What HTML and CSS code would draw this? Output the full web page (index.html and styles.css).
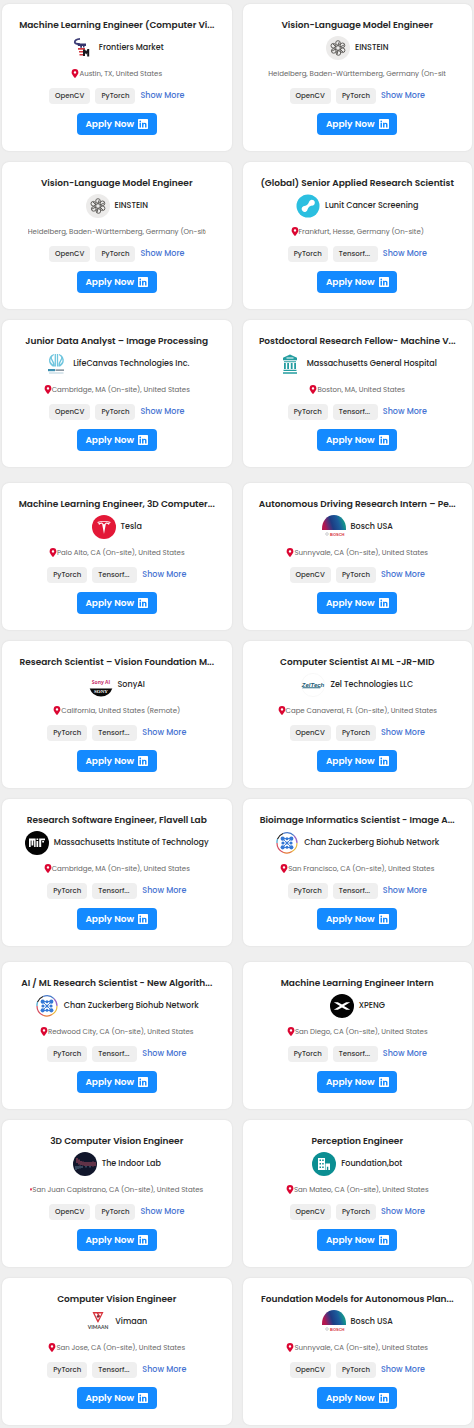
FILE: index.html
```html
<!DOCTYPE html>
<html lang="en">
<head>
<meta charset="utf-8">
<meta name="viewport" content="width=device-width, initial-scale=1">
<title>Computer vision jobs</title>
<link rel="stylesheet" href="styles.css">
</head>
<body>
<svg class="sprite" aria-hidden="true">
  <defs>
    <linearGradient id="bosch-fill" x1="0" x2="1" y1="0.2" y2="0">
      <stop offset="0" stop-color="#b3164f"/><stop offset="0.15" stop-color="#6a2a73"/><stop offset="0.32" stop-color="#1d3c83"/><stop offset="0.6" stop-color="#1b5c9c"/><stop offset="0.8" stop-color="#158f8f"/><stop offset="1" stop-color="#12a35e"/>
    </linearGradient>
  </defs>
  <symbol id="pin" viewBox="0 0 384 512"><path fill="#db0632" d="M172 502C27 291 0 270 0 192a192 192 0 0 1 384 0c0 78-27 99-172 310-10 13-30 13-40 0zM192 262a70 70 0 1 0 0-140 70 70 0 0 0 0 140z"/></symbol>
  <symbol id="linkedin" viewBox="0 0 20 20"><path fill="#fff" fill-rule="evenodd" d="M1.500 0h17A1.500 1.500 0 0 1 20 1.500v17a1.500 1.500 0 0 1-1.500 1.500h-17A1.500 1.500 0 0 1 0 18.500v-17A1.500 1.500 0 0 1 1.500 0zM3 7.600V17h3V7.600zM4.500 3a1.700 1.700 0 1 0 0 3.400 1.700 1.700 0 0 0 0-3.400zM8 7.600V17h3v-4.800c0-1.300.4-2.300 1.700-2.300S14.100 11 14.100 12.300V17H17v-5.300c0-2.600-.7-4.400-3.500-4.400-1.400 0-2.200.7-2.600 1.500V7.600z"/></symbol>
  <symbol id="frontiers" viewBox="0 0 24 24">
    <path fill="none" stroke="#3f3f78" stroke-width="1.800" d="M10 2.800C6.500 3 4.500 4.500 4.800 6.400c.2 1.400 2.300 1.700 5 1.500"/>
    <path fill="#34346c" d="M7 7.500h9V10h-1.500v1.500H13V10h-1v1.800h-1.800V10H8z"/><path fill="#d2373e" d="M8 12h7v1.700H8zM9 15h4v1.600H9zM9.500 18h4v1.400h-4z"/><path fill="#17171d" d="M13 13.500h2l1.200 1.800 1.300-2.300h1.700v7.500h-2V17l-1 1.500-1.200-1.500v3h-2z"/>
  </symbol>
  <symbol id="einstein" viewBox="0 0 24 24">
    <circle cx="12" cy="12" r="12" fill="#ecebea"/>
    <g fill="none" stroke="#55524f" stroke-width="0.900"><circle cx="12" cy="12" r="2.300"/><circle cx="12" cy="7" r="2.300"/><circle cx="16.500" cy="9.300" r="2.300"/><circle cx="16.600" cy="14.300" r="2.300"/><circle cx="12.400" cy="17" r="2.300"/><circle cx="7.700" cy="14.900" r="2.300"/><circle cx="7.300" cy="9.700" r="2.300"/><path d="M12 9.300l1-3M14 11l4-2M14 13l3 3M12 14.500l-1 4M10 13l-4 2M10 11L7 8"/></g>
  </symbol>
  <symbol id="lunit" viewBox="0 0 24 24">
    <circle cx="12" cy="12" r="11.500" fill="#2bbfe0"/>
    <path fill="#fff" d="M12.900 8.200a3 3 0 1 1 4.200 3.200c-3 .2-4.700 1.500-5.500 3.900a3 3 0 1 1-4.200-3.100c3-.3 4.700-1.600 5.500-4z"/>
  </symbol>
  <symbol id="lifecanvas" viewBox="0 0 24 24">
    <g fill="none" stroke="#6fc5de" stroke-width="1.300"><path d="M11.300 2v12.500M9.800 2.500C7 4 6.500 6 8 8s2 3 2 6.500M8 3.500C5 6 5 9.500 7 11.500s2.500 2 2.500 3M6 7c-1 3 0 5 3 7M13.500 2v12.500M15 2.500c3 1.500 3.500 3.500 2 5.500s-2 3-2 6.500M16.800 3.500c3 2.500 3 6 1 8s-2.500 2-2.500 3M18.800 7c1 3 0 5-3 7"/></g>
    <path fill="#3b8fb0" d="M4 17h7v2.200H4z"/><path fill="#8b98a3" d="M11.500 17.300H20v1.700h-8.500z"/><path fill="#b5cfdb" d="M5 20.500h14.500v1H5z"/>
  </symbol>
  <symbol id="mgh" viewBox="0 0 24 24">
    <path fill="#249da0" fill-rule="evenodd" d="M12 2.500 19 5.800V8.200H5V5.800zM8.500 5.600v1h7v-1zM6 9.200h12v1H6zM6 11h1.800v6H6zM9.200 11H11v6H9.200zM12.800 11h1.800v6h-1.800zM16.200 11H18v6h-1.800zM5.500 17.800h13v1.300h-13zM5 20.200h14v1.500H5z"/>
  </symbol>
  <symbol id="tesla" viewBox="0 0 24 24">
    <circle cx="12" cy="12" r="12" fill="#e31837"/>
    <path fill="#fff" d="m12 19 1.900-10.200c1.700 0 2.300.2 2.400 1 0 0 1.200-.4 1.700-1.300-2-1-4-1-4-1l-2 2-2-2s-2 0-4 1c.5.900 1.700 1.300 1.700 1.300.1-.8.700-1 2.400-1zM12 6.700c2 0 4.300.3 6.200 1.200.3-.4.400-.8.400-.8-2.300-1-4.600-1.200-6.600-1.200s-4.300.2-6.600 1.200c0 0 .1.400.4.800C7.700 7 10 6.700 12 6.700z"/>
  </symbol>
  <symbol id="mit" viewBox="0 0 24 24">
    <circle cx="12" cy="12" r="12" fill="#030303"/>
    <path fill="#fff" d="M4 7.500h6.600V16H9.100V9.500H8.300v5H6.500v-5H5.700V16H4zM11.500 7.500h1.700V9h-1.700zM11.500 10h1.700v6h-1.700zM14.200 7.500H20v1.800h-3.800V16h-2zM17.200 10H19v1.500h-1.800z"/>
  </symbol>
  <symbol id="biohub" viewBox="0 0 24 24">
    <g fill="none" stroke-width="1.200"><path stroke="#222" d="M2.500 8A10 10 0 0 1 8 2.500"/><path stroke="#4779c9" d="M8 2.500a10 10 0 0 1 11 2.200"/><path stroke="#9a68c4" d="M19 4.700A10 10 0 0 1 22 12"/><path stroke="#e9b83e" d="M22 12a10 10 0 0 1-5 8.600"/><path stroke="#e57a3a" d="M17 20.600a10 10 0 0 1-9 .600"/><path stroke="#d54c5e" d="M8 21.200A10 10 0 0 1 2 12"/><path stroke="#45a5cf" d="M2 12a10 10 0 0 1 .500-4"/></g>
    <g fill="#3478d5"><circle cx="7.700" cy="7.700" r="2.100"/><circle cx="12" cy="7.700" r="1.500"/><circle cx="16.300" cy="7.700" r="2.100"/><circle cx="8" cy="12" r="1.600"/><circle cx="12" cy="12" r="1.500"/><circle cx="16" cy="12" r="1.600"/><circle cx="7.700" cy="16.300" r="2.100"/><circle cx="12" cy="16.300" r="1.500"/><circle cx="16.300" cy="16.300" r="2.100"/></g>
    <path fill="none" stroke="#3478d5" stroke-width="0.900" d="M8 8l4 4 4-4M8 16l4-4 4 4M8 7.500h8M8 16.500h8"/>
  </symbol>
  <symbol id="xpeng" viewBox="0 0 24 24">
    <circle cx="12" cy="12" r="12" fill="#030303"/><path fill="#fff" d="M3.800 8.300h4L12 10.500l4.200-2.200h4L14 12l6.200 3.700h-4L12 13.500l-4.200 2.200h-4L10 12z"/>
  </symbol>
  <symbol id="indoor" viewBox="0 0 24 24">
    <circle cx="12" cy="12" r="12" fill="#11162b"/>
    <path stroke="#c4566b" stroke-width="0.900" fill="none" d="M4 6v5M6 7.500v5M8 9v4M10 9.500v4M12 10v4M14 10v4M16 10v4M18 10v4M20 9.500v5M22 10v4"/><path stroke="#6f93a8" stroke-width="0.800" fill="none" d="M3 14v4M5 14v3M7 13.500v3M9 14v2M13 14v1.500M17 14v1.500"/>
  </symbol>
  <symbol id="foundation" viewBox="0 0 24 24">
    <circle cx="12" cy="12" r="12" fill="#0b8e92"/>
    <path fill="#fff" fill-rule="evenodd" d="M6 6h7v12H6zM7.500 7.500V9H9V7.500zM10.200 7.500V9h1.500V7.500zM7.500 11v1.500H9V11zM10.200 11v1.500h1.500V11zM7.500 14.500V16H9v-1.500zM10.200 14.500V16h1.500v-1.500zM13.500 11.500H18V18h-1.700v-3.200h-1.400V18h-1.400z"/>
  </symbol>
</svg>
<main class="jobs">
  <section class="group">
    <article class="card">
      <h2 class="title">Machine Learning Engineer (Computer Vi...</h2>
      <div class="company"><svg class="logo"><use href="#frontiers"/></svg><span>Frontiers Market</span></div>
      <p class="location"><svg class="pin"><use href="#pin"/></svg><span>Austin, TX, United States</span></p>
      <div class="tags"><span class="tag">OpenCV</span><span class="tag">PyTorch</span><button class="more">Show More</button></div>
      <a class="apply" href="#">Apply Now<svg class="in"><use href="#linkedin"/></svg></a>
    </article>
    <article class="card">
      <h2 class="title">Vision-Language Model Engineer</h2>
      <div class="company"><svg class="logo"><use href="#einstein"/></svg><span>EINSTEIN</span></div>
      <p class="location"><svg class="pin"><use href="#pin"/></svg><span>Heidelberg, Baden-Württemberg, Germany (On-site)</span></p>
      <div class="tags"><span class="tag">OpenCV</span><span class="tag">PyTorch</span><button class="more">Show More</button></div>
      <a class="apply" href="#">Apply Now<svg class="in"><use href="#linkedin"/></svg></a>
    </article>
    <article class="card">
      <h2 class="title">Vision-Language Model Engineer</h2>
      <div class="company"><svg class="logo"><use href="#einstein"/></svg><span>EINSTEIN</span></div>
      <p class="location"><svg class="pin"><use href="#pin"/></svg><span>Heidelberg, Baden-Württemberg, Germany (On-site)</span></p>
      <div class="tags"><span class="tag">OpenCV</span><span class="tag">PyTorch</span><button class="more">Show More</button></div>
      <a class="apply" href="#">Apply Now<svg class="in"><use href="#linkedin"/></svg></a>
    </article>
    <article class="card">
      <h2 class="title">(Global) Senior Applied Research Scientist</h2>
      <div class="company"><svg class="logo"><use href="#lunit"/></svg><span>Lunit Cancer Screening</span></div>
      <p class="location"><svg class="pin"><use href="#pin"/></svg><span>Frankfurt, Hesse, Germany (On-site)</span></p>
      <div class="tags"><span class="tag">PyTorch</span><span class="tag tag-cut">Tensorf...</span><button class="more">Show More</button></div>
      <a class="apply" href="#">Apply Now<svg class="in"><use href="#linkedin"/></svg></a>
    </article>
    <article class="card">
      <h2 class="title">Junior Data Analyst – Image Processing</h2>
      <div class="company"><svg class="logo"><use href="#lifecanvas"/></svg><span>LifeCanvas Technologies Inc.</span></div>
      <p class="location"><svg class="pin"><use href="#pin"/></svg><span>Cambridge, MA (On-site), United States</span></p>
      <div class="tags"><span class="tag">OpenCV</span><span class="tag">PyTorch</span><button class="more">Show More</button></div>
      <a class="apply" href="#">Apply Now<svg class="in"><use href="#linkedin"/></svg></a>
    </article>
    <article class="card">
      <h2 class="title">Postdoctoral Research Fellow- Machine V...</h2>
      <div class="company"><svg class="logo"><use href="#mgh"/></svg><span>Massachusetts General Hospital</span></div>
      <p class="location"><svg class="pin"><use href="#pin"/></svg><span>Boston, MA, United States</span></p>
      <div class="tags"><span class="tag">PyTorch</span><span class="tag tag-cut">Tensorf...</span><button class="more">Show More</button></div>
      <a class="apply" href="#">Apply Now<svg class="in"><use href="#linkedin"/></svg></a>
    </article>
  </section>
  <section class="group">
    <article class="card">
      <h2 class="title">Machine Learning Engineer, 3D Computer...</h2>
      <div class="company"><svg class="logo"><use href="#tesla"/></svg><span>Tesla</span></div>
      <p class="location"><svg class="pin"><use href="#pin"/></svg><span>Palo Alto, CA (On-site), United States</span></p>
      <div class="tags"><span class="tag">PyTorch</span><span class="tag tag-cut">Tensorf...</span><button class="more">Show More</button></div>
      <a class="apply" href="#">Apply Now<svg class="in"><use href="#linkedin"/></svg></a>
    </article>
    <article class="card">
      <h2 class="title">Autonomous Driving Research Intern – Pe...</h2>
      <div class="company"><svg class="logo" viewBox="0 0 24 24"><path fill="url(#bosch-fill)" d="M0 15v-1.500C0 6 5 0 12 0s12 6 12 13.500V15z"/><circle cx="5" cy="19" r="1.300" fill="none" stroke="#9a9da2" stroke-width="0.500"/><text x="8" y="20.500" class="bosch-word">BOSCH</text></svg><span>Bosch USA</span></div>
      <p class="location"><svg class="pin"><use href="#pin"/></svg><span>Sunnyvale, CA (On-site), United States</span></p>
      <div class="tags"><span class="tag">OpenCV</span><span class="tag">PyTorch</span><button class="more">Show More</button></div>
      <a class="apply" href="#">Apply Now<svg class="in"><use href="#linkedin"/></svg></a>
    </article>
    <article class="card">
      <h2 class="title">Research Scientist – Vision Foundation M...</h2>
      <div class="company"><svg class="logo" viewBox="0 0 24 24"><path fill="#090909" d="M.700 15.500h22.600A12 12 0 0 1 .700 15.500z"/><text x="12" y="10.500" class="sony-ai" text-anchor="middle">Sony AI</text><text x="12" y="20" class="sony-word" text-anchor="middle">SONY</text></svg><span>SonyAI</span></div>
      <p class="location"><svg class="pin"><use href="#pin"/></svg><span>California, United States (Remote)</span></p>
      <div class="tags"><span class="tag">PyTorch</span><span class="tag tag-cut">Tensorf...</span><button class="more">Show More</button></div>
      <a class="apply" href="#">Apply Now<svg class="in"><use href="#linkedin"/></svg></a>
    </article>
    <article class="card">
      <h2 class="title">Computer Scientist AI ML -JR-MID</h2>
      <div class="company"><svg class="logo" viewBox="0 0 24 24"><circle cx="12" cy="12" r="11.600" fill="none" stroke="#f3f3f3" stroke-width="0.600"/><text x="12" y="14" class="zel-word" text-anchor="middle">ZelTech</text><path fill="#2b6a82" d="M2 14.200h18l-1 1H1z"/></svg><span>Zel Technologies LLC</span></div>
      <p class="location"><svg class="pin"><use href="#pin"/></svg><span>Cape Canaveral, FL (On-site), United States</span></p>
      <div class="tags"><span class="tag">OpenCV</span><span class="tag">PyTorch</span><button class="more">Show More</button></div>
      <a class="apply" href="#">Apply Now<svg class="in"><use href="#linkedin"/></svg></a>
    </article>
    <article class="card">
      <h2 class="title">Research Software Engineer, Flavell Lab</h2>
      <div class="company"><svg class="logo"><use href="#mit"/></svg><span>Massachusetts Institute of Technology</span></div>
      <p class="location"><svg class="pin"><use href="#pin"/></svg><span>Cambridge, MA (On-site), United States</span></p>
      <div class="tags"><span class="tag">PyTorch</span><span class="tag tag-cut">Tensorf...</span><button class="more">Show More</button></div>
      <a class="apply" href="#">Apply Now<svg class="in"><use href="#linkedin"/></svg></a>
    </article>
    <article class="card">
      <h2 class="title">Bioimage Informatics Scientist - Image A...</h2>
      <div class="company"><svg class="logo"><use href="#biohub"/></svg><span>Chan Zuckerberg Biohub Network</span></div>
      <p class="location"><svg class="pin"><use href="#pin"/></svg><span>San Francisco, CA (On-site), United States</span></p>
      <div class="tags"><span class="tag">PyTorch</span><span class="tag tag-cut">Tensorf...</span><button class="more">Show More</button></div>
      <a class="apply" href="#">Apply Now<svg class="in"><use href="#linkedin"/></svg></a>
    </article>
  </section>
  <section class="group">
    <article class="card">
      <h2 class="title">AI / ML Research Scientist - New Algorith...</h2>
      <div class="company"><svg class="logo"><use href="#biohub"/></svg><span>Chan Zuckerberg Biohub Network</span></div>
      <p class="location"><svg class="pin"><use href="#pin"/></svg><span>Redwood City, CA (On-site), United States</span></p>
      <div class="tags"><span class="tag">PyTorch</span><span class="tag tag-cut">Tensorf...</span><button class="more">Show More</button></div>
      <a class="apply" href="#">Apply Now<svg class="in"><use href="#linkedin"/></svg></a>
    </article>
    <article class="card">
      <h2 class="title">Machine Learning Engineer Intern</h2>
      <div class="company"><svg class="logo"><use href="#xpeng"/></svg><span>XPENG</span></div>
      <p class="location"><svg class="pin"><use href="#pin"/></svg><span>San Diego, CA (On-site), United States</span></p>
      <div class="tags"><span class="tag">PyTorch</span><span class="tag tag-cut">Tensorf...</span><button class="more">Show More</button></div>
      <a class="apply" href="#">Apply Now<svg class="in"><use href="#linkedin"/></svg></a>
    </article>
    <article class="card">
      <h2 class="title">3D Computer Vision Engineer</h2>
      <div class="company"><svg class="logo"><use href="#indoor"/></svg><span>The Indoor Lab</span></div>
      <p class="location"><svg class="pin pin-tiny"><use href="#pin"/></svg><span>San Juan Capistrano, CA (On-site), United States</span></p>
      <div class="tags"><span class="tag">OpenCV</span><span class="tag">PyTorch</span><button class="more">Show More</button></div>
      <a class="apply" href="#">Apply Now<svg class="in"><use href="#linkedin"/></svg></a>
    </article>
    <article class="card">
      <h2 class="title">Perception Engineer</h2>
      <div class="company"><svg class="logo"><use href="#foundation"/></svg><span>Foundation,bot</span></div>
      <p class="location"><svg class="pin"><use href="#pin"/></svg><span>San Mateo, CA (On-site), United States</span></p>
      <div class="tags"><span class="tag">OpenCV</span><span class="tag">PyTorch</span><button class="more">Show More</button></div>
      <a class="apply" href="#">Apply Now<svg class="in"><use href="#linkedin"/></svg></a>
    </article>
    <article class="card">
      <h2 class="title">Computer Vision Engineer</h2>
      <div class="company"><svg class="logo" viewBox="0 0 24 24"><path fill="#d8333c" fill-rule="evenodd" d="M6.500 2h11L12.300 12.500h-.700zM8.600 3.400 12 10l1.500-2.800-2.700-3.800zM12.400 3.400l1.800 2.600 1.300-2.600z"/><path fill="#7b2737" d="m10.500 6.200 1.500-1.500 1.500 1.500-1.500 2z"/><text x="12" y="18.500" class="vimaan-word" text-anchor="middle">VIMAAN</text></svg><span>Vimaan</span></div>
      <p class="location"><svg class="pin"><use href="#pin"/></svg><span>San Jose, CA (On-site), United States</span></p>
      <div class="tags"><span class="tag">PyTorch</span><span class="tag tag-cut">Tensorf...</span><button class="more">Show More</button></div>
      <a class="apply" href="#">Apply Now<svg class="in"><use href="#linkedin"/></svg></a>
    </article>
    <article class="card">
      <h2 class="title">Foundation Models for Autonomous Plan...</h2>
      <div class="company"><svg class="logo" viewBox="0 0 24 24"><path fill="url(#bosch-fill)" d="M0 15v-1.500C0 6 5 0 12 0s12 6 12 13.500V15z"/><circle cx="5" cy="19" r="1.300" fill="none" stroke="#9a9da2" stroke-width="0.500"/><text x="8" y="20.500" class="bosch-word">BOSCH</text></svg><span>Bosch USA</span></div>
      <p class="location"><svg class="pin"><use href="#pin"/></svg><span>Sunnyvale, CA (On-site), United States</span></p>
      <div class="tags"><span class="tag">OpenCV</span><span class="tag">PyTorch</span><button class="more">Show More</button></div>
      <a class="apply" href="#">Apply Now<svg class="in"><use href="#linkedin"/></svg></a>
    </article>
  </section>
</main>
</body>
</html>
```
FILE: styles.css
```css
* { box-sizing: border-box; }
body {
  margin: 0;
  background: #efefef;
  color: #262626;
  font-family: Poppins, Inter, sans-serif;
}
.sprite { position: absolute; width: 0; height: 0; }
.jobs { display: flex; flex-direction: column; gap: 16px; padding: 4px 2px 3px; }
.group { display: grid; grid-template-columns: repeat(2, minmax(0, 1fr)); gap: 11px; }
.card {
  display: flex;
  flex-direction: column;
  align-items: center;
  padding: 14px 16px 16px;
  background: #fff;
  border-radius: 7px;
  box-shadow: 0 0 2px rgba(0, 0, 0, 0.1);
}
.title { margin: 0 0 3px; font-size: 9px; line-height: 15px; font-weight: 600; white-space: nowrap; }
.company { display: flex; align-items: center; gap: 5px; font-size: 8px; line-height: 12px; font-weight: 500; white-space: nowrap; }
.logo { width: 24px; height: 24px; flex: none; overflow: visible; }
.location {
  display: flex;
  align-items: center;
  justify-content: safe center;
  width: 178px;
  max-width: 100%;
  margin: 6px 0 7px;
  overflow: hidden;
  color: #666;
  font-size: 7px;
  line-height: 15px;
  white-space: nowrap;
}
.location span { flex: none; }
.pin { width: 8px; height: 9px; min-width: 0; flex: 0 1 auto; }
.pin-tiny { width: 2px; }
.tags { display: flex; align-items: center; gap: 5px; margin-bottom: 9px; }
.tag { padding: 0 6px; border-radius: 4px; background: #efefef; color: #333; font-size: 7px; line-height: 16px; font-weight: 500; }
.tag-cut { padding-right: 8px; }
.more { padding: 0; border: 0; background: none; color: #4673d2; font: inherit; font-size: 8px; line-height: 16px; font-weight: 500; cursor: pointer; }
.apply {
  display: flex;
  align-items: center;
  justify-content: center;
  gap: 4px;
  min-width: 80px;
  height: 22px;
  border-radius: 4px;
  background: #148aff;
  color: #fff;
  font-size: 9px;
  font-weight: 600;
  text-decoration: none;
}
.in { width: 10px; height: 10px; }
.bosch-word { font: 700 4px "Liberation Sans", sans-serif; fill: #d5303c; }
.sony-ai { font: 700 5px "Open Sans", sans-serif; fill: #c8356f; }
.sony-word { font: 700 5px "Liberation Serif", serif; fill: #fff; }
.zel-word { font: italic 700 6px "Liberation Sans", sans-serif; fill: #215a74; }
.vimaan-word { font: 700 5px Lato, sans-serif; fill: #444; }
```
